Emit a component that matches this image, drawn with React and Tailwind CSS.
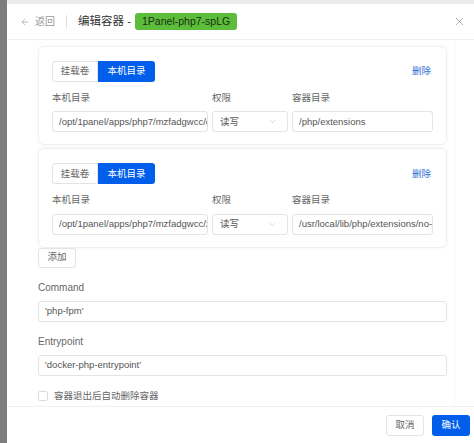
import { ArrowLeft, X, ChevronDown } from 'lucide-react';

const FONT = { fontFamily: '"Liberation Sans", "Noto Sans CJK SC", sans-serif' };

function MountCard({ hostPath, containerPath }) {
  return (
    <div className="border border-[#f0f0f0] rounded-md px-[13px] pt-[14px] pb-[12px] shadow-[0_0_4px_rgba(0,0,0,0.04)]">
      <div className="flex items-center justify-between">
        <div className="flex h-[21px] text-[9.5px]">
          <div className="w-[46px] flex items-center justify-center border border-[#e4e4e4] rounded-l-[3px] text-[#666]">挂载卷</div>
          <div className="w-[57px] flex items-center justify-center bg-[#005eeb] rounded-r-[3px] text-white">本机目录</div>
        </div>
        <div className="text-[9.5px] text-[#2f6fd6] mr-[2px]">删除</div>
      </div>
      <div className="flex gap-[4px] mt-[9px] text-[9.5px] text-[#666]">
        <div className="w-[156px]">本机目录</div>
        <div className="w-[76px]">权限</div>
        <div>容器目录</div>
      </div>
      <div className="flex gap-[4px] mt-[6px] text-[9.5px] text-[#555]">
        <div className="w-[156px] h-[21px] border border-[#e4e4e4] rounded-[3px] px-[6px] flex items-center overflow-hidden whitespace-nowrap">{hostPath}</div>
        <div className="w-[76px] h-[21px] border border-[#e4e4e4] rounded-[3px] pl-[7px] pr-[10px] flex items-center justify-between">
          <span>读写</span>
          <ChevronDown size={9} strokeWidth={1.5} className="text-[#bbb]" />
        </div>
        <div className="w-[141px] h-[21px] border border-[#e4e4e4] rounded-[3px] px-[6px] flex items-center overflow-hidden whitespace-nowrap">{containerPath}</div>
      </div>
    </div>
  );
}

export default function App() {
  return (
    <div className="w-[474px] h-[443px] flex bg-white overflow-hidden" style={FONT}>
      <div className="w-[7px] bg-[#7d7d7d] shrink-0" />
      <div className="flex-1 flex flex-col border-t-[4px] border-[#ececec] min-h-0">
        <div className="h-[36px] flex items-center pl-[13px] pr-[8px] border-b border-[#f0f0f0] shrink-0">
          <ArrowLeft size={10} strokeWidth={1.5} className="text-[#999]" />
          <span className="ml-[5px] text-[10px] text-[#999]">返回</span>
          <div className="w-px h-[14px] bg-[#e0e0e0] ml-[11px]" />
          <span className="ml-[11px] text-[11.5px] text-[#333]">编辑容器 -</span>
          <span className="ml-[4px] h-[17px] px-[7px] flex items-center rounded-[3px] bg-[#5cbd3a] text-[#1d2d14] text-[10.5px]">1Panel-php7-spLG</span>
          <div className="flex-1" />
          <X size={13} strokeWidth={1.2} className="text-[#888]" />
        </div>
        <div className="flex flex-1 min-h-0 overflow-hidden">
          <div className="w-[409px] ml-[31px] pt-[6px] flex flex-col">
            <MountCard hostPath="/opt/1panel/apps/php7/mzfadgwcc/extensions" containerPath="/php/extensions" />
            <div className="h-[3px]" />
            <MountCard hostPath="/opt/1panel/apps/php7/mzfadgwcc/2" containerPath="/usr/local/lib/php/extensions/no-debug" />
            <div className="w-[38px] h-[20px] border border-[#e4e4e4] rounded-[3px] text-[9.5px] text-[#666] flex items-center justify-center">添加</div>
            <div className="mt-[12px] text-[10px] text-[#666]">Command</div>
            <div className="mt-[6px] h-[21px] border border-[#e4e4e4] rounded-[3px] px-[6px] flex items-center text-[9.5px] text-[#555]">'php-fpm'</div>
            <div className="mt-[12px] text-[10px] text-[#666]">Entrypoint</div>
            <div className="mt-[6px] h-[21px] border border-[#e4e4e4] rounded-[3px] px-[6px] flex items-center text-[9.5px] text-[#555]">'docker-php-entrypoint'</div>
            <div className="mt-[13px] flex items-center">
              <div className="w-[10px] h-[10px] border border-[#dcdcdc] rounded-[2px]" />
              <span className="ml-[6px] text-[9.5px] text-[#666]">容器退出后自动删除容器</span>
            </div>
          </div>
          <div className="flex-1 border-l border-[#f6f6f6] ml-[7px]" />
        </div>
        <div className="h-[37px] border-t border-[#f0f0f0] flex items-center justify-end pr-[4px] gap-[8px] shrink-0">
          <div className="w-[38px] h-[21px] border border-[#e4e4e4] rounded-[3px] text-[9.5px] text-[#666] flex items-center justify-center">取消</div>
          <div className="w-[38px] h-[21px] bg-[#005eeb] rounded-[3px] text-[9.5px] text-white flex items-center justify-center">确认</div>
        </div>
      </div>
    </div>
  );
}
